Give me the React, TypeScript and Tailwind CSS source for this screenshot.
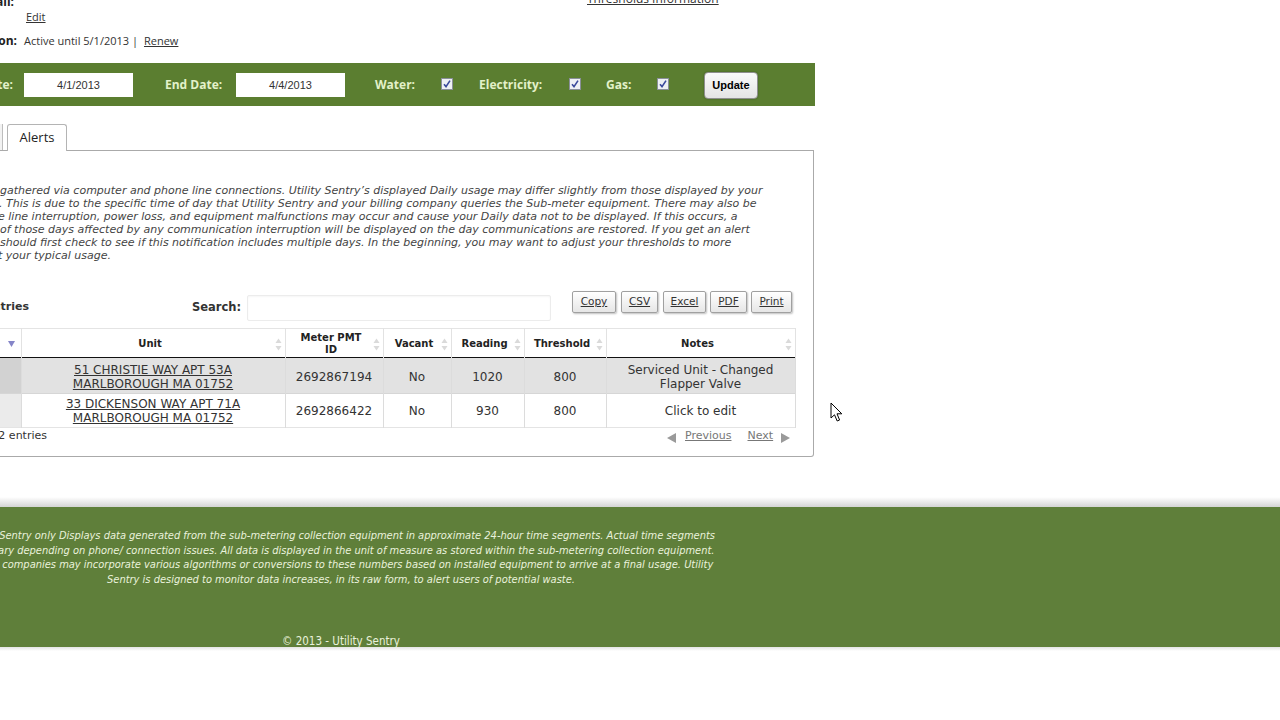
import React from "react";

const SortBoth = () => (
  <svg width="7" height="13" viewBox="0 0 7 13" className="shrink-0">
    <path d="M3.5 0.5 L6.5 5 H0.5 Z" fill="#dadada" />
    <path d="M3.5 12.5 L6.5 8 H0.5 Z" fill="#dadada" />
  </svg>
);

const Check = () => (
  <svg width="12" height="12" viewBox="0 0 12 12" className="shrink-0 -mt-[2px]">
    <rect x="0.5" y="0.5" width="11" height="11" fill="#eef0f4" stroke="#8a8f99" />
    <path d="M3 6.2 L5 8.6 L9 2.6" fill="none" stroke="#3b4a9c" strokeWidth="1.6" />
  </svg>
);

const Clip = ({ w, text, className = "" }: { w: string; text: string; className?: string }) => (
  <div className={`${w} overflow-hidden flex justify-end shrink-0 ${className}`}>
    <span className="whitespace-nowrap">{text}</span>
  </div>
);

const btn =
  "h-[22px] flex items-center justify-center border border-[#a0a0a0] rounded-[2px] bg-gradient-to-b from-white to-[#e6e6e6] shadow-[1px_1px_2px_rgba(0,0,0,0.25)] text-[10.5px] underline text-[#333] shrink-0";

export default function App() {
  const th = "h-[29px] border-r border-[#e2e2e2] p-0 font-bold text-[10px] text-[#222]";
  const td = "border-r border-[#dcdcdc] p-0 text-center text-[12px] text-[#333]";
  return (
    <div className="relative w-[1280px] h-[720px] overflow-hidden bg-white font-['Open_Sans',sans-serif] text-[#333]">
      {/* top info */}
      <div className="h-[63px] flex flex-col">
        <div className="h-[10px] flex items-start">
          <Clip w="w-[14px]" text="Email:" className="-mt-[6px] font-bold text-[12px] leading-[16px] text-[#222]" />
          <a className="ml-[573px] -mt-[9px] text-[12px] leading-[16px] underline text-[#333] whitespace-nowrap">
            Thresholds Information
          </a>
        </div>
        <div className="h-[14px] pl-[26px] text-[11px] leading-[14px]">
          <a className="underline text-[#333]">Edit</a>
        </div>
        <div className="mt-[9px] h-[16px] flex items-center text-[11px] leading-[16px]">
          <Clip w="w-[17px]" text="Subscription:" className="font-bold text-[12px] text-[#222]" />
          <span className="ml-[7px] whitespace-nowrap">Active until 5/1/2013 |</span>
          <a className="ml-[6px] underline">Renew</a>
        </div>
      </div>

      {/* green filter bar */}
      <div className="h-[43px] w-[815px] bg-[#5b7e30] flex items-center pt-[1px] font-bold text-[12px] text-[#e3f1c9]">
        <Clip w="w-[13px]" text="Start Date:" />
        <div className="ml-[11px] w-[109px] h-[24px] bg-white flex items-center justify-center font-normal text-[11px] text-[#333] font-['Liberation_Sans',sans-serif]">
          4/1/2013
        </div>
        <div className="ml-[32px] w-[71px] shrink-0">End Date:</div>
        <div className="w-[109px] h-[24px] bg-white flex items-center justify-center font-normal text-[11px] text-[#333] font-['Liberation_Sans',sans-serif]">
          4/4/2013
        </div>
        <div className="ml-[30px] w-[66px] shrink-0">Water:</div>
        <Check />
        <div className="ml-[26px] w-[90px] shrink-0">Electricity:</div>
        <Check />
        <div className="ml-[25px] w-[51px] shrink-0">Gas:</div>
        <Check />
        <div className="ml-[35px] w-[54px] h-[27px] rounded-[4px] border border-[#8f8f8f] bg-gradient-to-b from-[#fafafa] to-[#e4e4e4] flex items-center justify-center text-[11px] text-black font-['Liberation_Sans',sans-serif] shadow-[0_0_2px_rgba(0,0,0,0.3)]">
          Update
        </div>
      </div>

      {/* tabs */}
      <div className="mt-[18px] h-[26px] flex items-end">
        <div className="w-[3px] h-[26px] bg-[#f2f2f2] border-r border-[#bdbdbd]" />
        <div className="ml-[4px] relative z-10 -mb-px w-[60px] h-[27px] bg-white border-x border-t border-[#b4b4b4] rounded-t-[3px] flex items-center justify-center text-[13px] text-[#222]">
          Alerts
        </div>
      </div>

      {/* panel */}
      <div className="w-[814px] h-[307px] border-t border-r border-b border-[#aaaaaa] rounded-br-[3px] flex flex-col font-['DejaVu_Sans',sans-serif]">
        <div className="pt-[33px] italic text-[11px] leading-[13px] text-[#444]">
          <div className="whitespace-nowrap">gathered via computer and phone line connections. Utility Sentry’s displayed Daily usage may differ slightly from those displayed by your</div>
          <div className="whitespace-nowrap -ml-[1px]">. This is due to the specific time of day that Utility Sentry and your billing company queries the Sub-meter equipment. There may also be</div>
          <div className="whitespace-nowrap -ml-[2px]">e line interruption, power loss, and equipment malfunctions may occur and cause your Daily data not to be displayed. If this occurs, a</div>
          <div className="whitespace-nowrap">of those days affected by any communication interruption will be displayed on the day communications are restored. If you get an alert</div>
          <div className="whitespace-nowrap">should first check to see if this notification includes multiple days. In the beginning, you may want to adjust your thresholds to more</div>
          <div className="whitespace-nowrap -ml-[2px]">t your typical usage.</div>
        </div>

        {/* controls */}
        <div className="mt-[29px] h-[31px] flex items-start">
          <Clip w="w-[29px]" text="Show 10 entries" className="h-[31px] pt-[2px] items-center font-bold text-[11px] text-[#333]" />
          <div className="ml-[163px] w-[55px] h-[31px] pt-[3px] flex items-center font-bold text-[11.5px] text-[#333] shrink-0">
            Search:
          </div>
          <div className="mt-[4px] w-[304px] h-[26px] border border-[#ececec] rounded-[2px] bg-white shadow-[inset_0_1px_2px_rgba(0,0,0,0.04)] shrink-0" />
          <div className={`ml-[21px] w-[44px] ${btn}`}>Copy</div>
          <div className={`ml-[5px] w-[37px] ${btn}`}>CSV</div>
          <div className={`ml-[5px] w-[43px] ${btn}`}>Excel</div>
          <div className={`ml-[4px] w-[37px] ${btn}`}>PDF</div>
          <div className={`ml-[4px] w-[41px] ${btn}`}>Print</div>
        </div>

        {/* table */}
        <table className="mt-[6px] w-[795px] table-fixed border-collapse">
          <colgroup>
            <col className="w-[21px]" />
            <col className="w-[264px]" />
            <col className="w-[98px]" />
            <col className="w-[68px]" />
            <col className="w-[73px]" />
            <col className="w-[82px]" />
            <col className="w-[189px]" />
          </colgroup>
          <thead>
            <tr className="border-t border-[#e4e4e4] border-b border-b-[#111]">
              <th className={th}>
                <div className="flex items-center pl-[8px] pt-[2px]">
                  <svg width="7" height="6" viewBox="0 0 7 6">
                    <path d="M0 0 H7 L3.5 6 Z" fill="#8585c8" />
                  </svg>
                </div>
              </th>
              {[
                ["Unit"],
                ["Meter PMT", "ID"],
                ["Vacant"],
                ["Reading"],
                ["Threshold"],
                ["Notes"],
              ].map((h, i) => (
                <th key={i} className={th}>
                  <div className="flex items-center pl-[4px] pr-[3px] pt-[2px]">
                    <span className="flex-1 text-center leading-[12px]">
                      {h[0]}
                      {h[1] && <br />}
                      {h[1]}
                    </span>
                    <SortBoth />
                  </div>
                </th>
              ))}
            </tr>
          </thead>
          <tbody>
            <tr className="h-[36px] bg-[#e2e2e2] border-b border-[#d6d6d6]">
              <td className={`${td} bg-[#d2d2d2]`} />
              <td className={`${td} leading-[14px] pt-[2px]`}>
                <a className="underline text-[#333]">
                  51 CHRISTIE WAY APT 53A
                  <br />
                  MARLBOROUGH MA 01752
                </a>
              </td>
              <td className={`${td} pt-[2px]`}>2692867194</td>
              <td className={`${td} pt-[2px]`}>No</td>
              <td className={`${td} pt-[2px]`}>1020</td>
              <td className={`${td} pt-[2px]`}>800</td>
              <td className={`${td} leading-[14px] pt-[2px]`}>
                Serviced Unit - Changed
                <br />
                Flapper Valve
              </td>
            </tr>
            <tr className="h-[34px] bg-white border-b border-[#e4e4e4]">
              <td className={`${td} bg-[#ebebeb]`} />
              <td className={`${td} leading-[14px]`}>
                <a className="underline text-[#333]">
                  33 DICKENSON WAY APT 71A
                  <br />
                  MARLBOROUGH MA 01752
                </a>
              </td>
              <td className={td}>2692866422</td>
              <td className={td}>No</td>
              <td className={td}>930</td>
              <td className={td}>800</td>
              <td className={td}>Click to edit</td>
            </tr>
          </tbody>
        </table>

        {/* info / pagination */}
        <div className="h-[17px] flex items-center text-[11px] text-[#333]">
          <Clip w="w-[47px]" text="Showing 1 to 2 of 2 entries" />
          <svg width="9" height="10" viewBox="0 0 9 10" className="ml-[620px] mt-[3px]">
            <path d="M9 0 V10 L0 5 Z" fill="#9a9a9a" />
          </svg>
          <a className="ml-[9px] underline text-[#777]">Previous</a>
          <a className="ml-[16px] underline text-[#777]">Next</a>
          <svg width="9" height="10" viewBox="0 0 9 10" className="ml-[8px] mt-[3px]">
            <path d="M0 0 V10 L9 5 Z" fill="#9a9a9a" />
          </svg>
        </div>
      </div>

      <div className="h-[40px]" />
      <div className="h-[10px] bg-gradient-to-b from-white to-[#d4d4d4]" />

      {/* footer */}
      <footer className="h-[140px] bg-[#5f7f3a] flex flex-col text-[#eaf2dc] font-['DejaVu_Sans_Condensed','Liberation_Sans',sans-serif]">
        <div className="-ml-[42px] w-[766px] pt-[22px] text-center italic text-[11px] leading-[14.5px]">
          <div className="whitespace-nowrap">Utility Sentry only Displays data generated from the sub-metering collection equipment in approximate 24-hour time segments. Actual time segments</div>
          <div className="whitespace-nowrap">may vary depending on phone/ connection issues. All data is displayed in the unit of measure as stored within the sub-metering collection equipment.</div>
          <div className="whitespace-nowrap">Billing companies may incorporate various algorithms or conversions to these numbers based on installed equipment to arrive at a final usage. Utility</div>
          <div className="whitespace-nowrap">Sentry is designed to monitor data increases, in its raw form, to alert users of potential waste.</div>
        </div>
        <div className="-ml-[42px] w-[766px] mt-[47px] text-center text-[11.5px] leading-[14px]">© 2013 - Utility Sentry</div>
      </footer>
      <div className="h-[4px] bg-gradient-to-b from-[#e4e4e4] to-white" />

      {/* mouse cursor */}
      <svg width="14" height="21" viewBox="0 0 14 21" className="absolute left-[830px] top-[402px]">
        <path d="M1 1 L1 16 L4.5 12.8 L7.2 19 L9.6 18 L7 11.8 L11.8 11.8 Z" fill="white" stroke="black" strokeWidth="1" strokeLinejoin="round" />
      </svg>
    </div>
  );
}
